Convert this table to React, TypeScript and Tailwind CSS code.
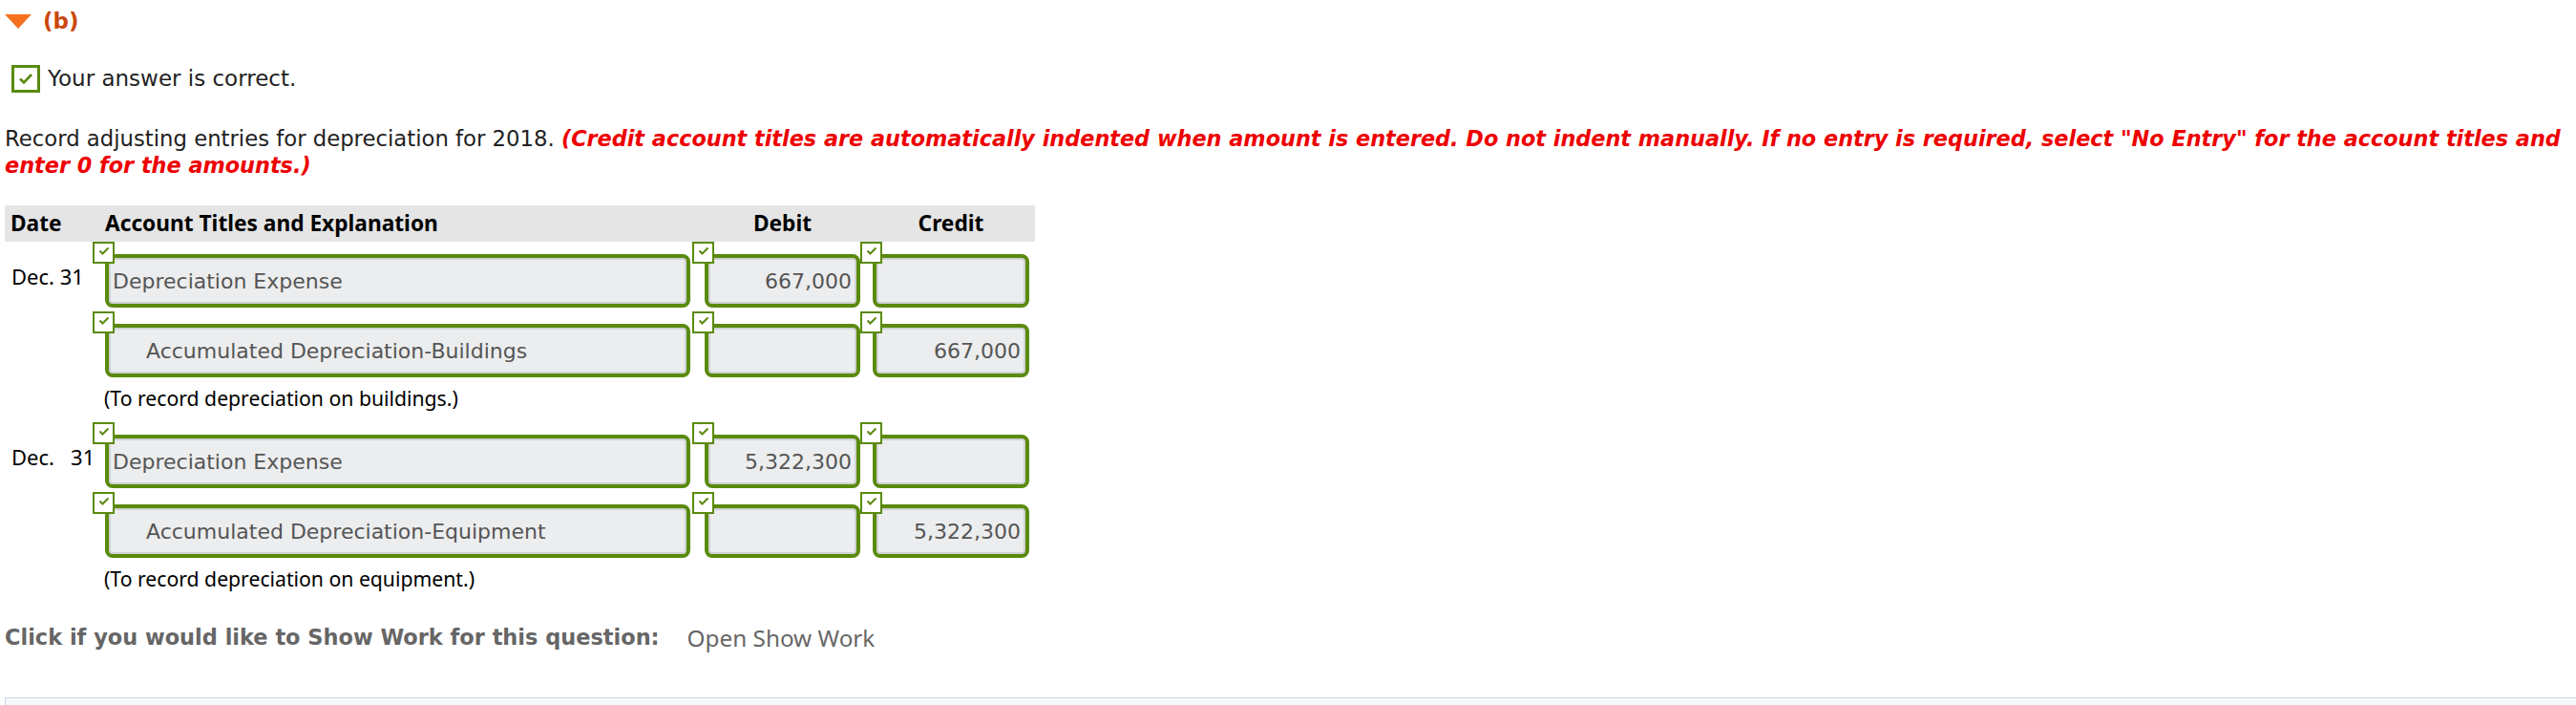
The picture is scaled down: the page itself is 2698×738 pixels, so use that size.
import React from "react";

const verdana = "font-['DejaVu_Sans',Verdana,sans-serif]";
const tahoma = "font-['Noto_Sans',Tahoma,sans-serif]";

function SmallCheck() {
  return (
    <span className="absolute left-0 top-0 z-10 flex h-[23px] w-[23px] items-start justify-center border-2 border-[#5a8a0e] bg-white pt-[3px]">
      <svg width="12" height="10" viewBox="0 0 12 10">
        <path d="M1.5 4.5 L4.5 7.5 L10.5 1.5" stroke="#5a8a0e" strokeWidth="2" fill="none" />
      </svg>
    </span>
  );
}

function Field({
  width,
  value,
  align = "left",
  indent = false,
}: {
  width: string;
  value?: string;
  align?: "left" | "right";
  indent?: boolean;
}) {
  return (
    <div className="relative pl-[13px] pt-[13px]">
      <SmallCheck />
      <div
        className={`flex h-[56px] items-center rounded-[8px] border-4 border-[#5a8a0e] bg-[#ecedee] shadow-[inset_0_0_0_2px_#cfd2d4] ${width} ${
          align === "right" ? "justify-end pr-[5px]" : indent ? "pl-[39px]" : "pl-[4px]"
        }`}
      >
        <span className={`${verdana} text-[22px] text-[#555]`}>{value}</span>
      </div>
    </div>
  );
}

function EntryRow({
  date,
  account,
  debit,
  credit,
  indent = false,
  last = false,
}: {
  date?: string;
  account: string;
  debit?: string;
  credit?: string;
  indent?: boolean;
  last?: boolean;
}) {
  return (
    <div className={`flex ${last ? "" : "mb-[4px]"}`}>
      <div className="w-[92px] shrink-0 pt-[13px]">
        <div className={`flex h-[56px] items-center whitespace-pre pb-[10px] pl-[7px] ${tahoma} text-[22px] text-black`}>
          {date}
        </div>
      </div>
      <div className="w-[628px] shrink-0">
        <Field width="w-[613px]" value={account} indent={indent} />
      </div>
      <div className="w-[176px] shrink-0">
        <Field width="w-[163px]" value={debit} align="right" />
      </div>
      <div className="w-[177px] shrink-0">
        <Field width="w-[164px]" value={credit} align="right" />
      </div>
    </div>
  );
}

function Explanation({ children }: { children: React.ReactNode }) {
  return (
    <div className={`h-[47px] pl-[104px] pt-[5px] ${tahoma} text-[21.2px] leading-[34px] text-black`}>
      {children}
    </div>
  );
}

export default function App() {
  return (
    <div className="min-h-[738px] w-[2698px] bg-white">
      <div className="pl-[5px]">
        <div className="flex h-[38px] items-center gap-[12px] pt-[7px]">
          <svg width="28" height="15" viewBox="0 0 28 15">
            <path d="M0 0 H28 L14 15 Z" fill="#f5701f" />
          </svg>
          <span className={`${verdana} text-[23px] font-bold text-[#c9480c]`}>(b)</span>
        </div>

        <div className="mt-[30px] flex h-[29px] items-center gap-[8px] pl-[7px]">
          <span className="flex h-[29px] w-[30px] items-center justify-center border-[3px] border-[#5a8a0e] bg-white">
            <svg width="16" height="13" viewBox="0 0 16 13">
              <path d="M2 6.5 L6 10.5 L14 2" stroke="#5a8a0e" strokeWidth="2.6" fill="none" />
            </svg>
          </span>
          <span className={`${verdana} text-[23px] text-[#222]`}>Your answer is correct.</span>
        </div>

        <p className={`mt-[34px] whitespace-nowrap ${verdana} text-[22.75px] leading-[28px] text-[#222]`}>
          Record adjusting entries for depreciation for 2018.{" "}
          <span className="text-[22.35px] font-bold italic text-[#ee0000]">
            (Credit account titles are automatically indented when amount is entered. Do not indent
            manually. If no entry is required, select "No Entry" for the account titles and
            <br />
            enter 0 for the amounts.)
          </span>
        </p>

        <div className="mt-[28px] w-[1079px]">
          <div className={`flex h-[38px] items-center bg-[#e5e5e5] ${tahoma} text-[22.7px] font-bold text-black`}>
            <div className="w-[92px] shrink-0 pl-[6px]">Date</div>
            <div className="w-[628px] shrink-0 pl-[13px]">Account Titles and Explanation</div>
            <div className="w-[176px] shrink-0 pl-[13px] text-center">Debit</div>
            <div className="w-[177px] shrink-0 pl-[13px] text-center">Credit</div>
          </div>

          <EntryRow date="Dec. 31" account="Depreciation Expense" debit="667,000" />
          <EntryRow account="Accumulated Depreciation-Buildings" credit="667,000" indent last />
          <Explanation>(To record depreciation on buildings.)</Explanation>

          <EntryRow date={"Dec.   31"} account="Depreciation Expense" debit="5,322,300" />
          <EntryRow account="Accumulated Depreciation-Equipment" credit="5,322,300" indent last />
          <Explanation>(To record depreciation on equipment.)</Explanation>
        </div>

        <div className="mt-[22px] flex h-[30px] items-center">
          <span className={`${verdana} text-[22.45px] font-bold text-[#666]`}>
            Click if you would like to Show Work for this question:
          </span>
          <span className={`ml-[29px] ${tahoma} text-[24.3px] text-[#666]`}>Open Show Work</span>
        </div>

        <div className="mt-[47px] h-[8px] border-t border-l border-[#cdd5dd] bg-[#f5f8fb]" />
      </div>
    </div>
  );
}
